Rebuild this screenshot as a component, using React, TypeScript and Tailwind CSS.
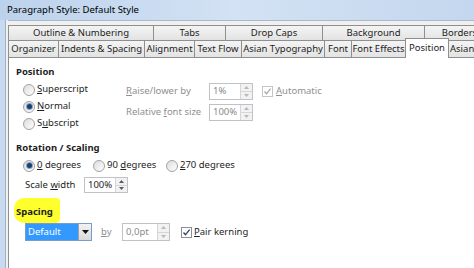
import React from "react";

const ink = "text-[#1e1e1e]";

function U({ children }: { children: React.ReactNode }) {
  return <span className="underline underline-offset-[1px]">{children}</span>;
}

function Radio({ checked }: { checked?: boolean }) {
  return (
    <span className="flex h-[12px] w-[12px] shrink-0 items-center justify-center rounded-full border border-[#a3a3a3] bg-gradient-to-br from-[#dcdcdc] to-[#ffffff]">
      {checked && <span className="h-[5px] w-[5px] rounded-full bg-[#1f3f66] shadow-[0_0_0_1px_#7fa6cf]" />}
    </span>
  );
}

function Check({ disabled }: { disabled?: boolean }) {
  return (
    <span
      className={`flex h-[11px] w-[11px] shrink-0 items-center justify-center border bg-white ${
        disabled ? "border-[#c4c4c4]" : "border-[#8e8f8f]"
      }`}
    >
      <svg width="9" height="9" viewBox="0 0 9 9">
        <path
          d="M1.5 4.5 L3.5 6.8 L7.6 1.6"
          fill="none"
          stroke={disabled ? "#a8a8a8" : "#2a3f6a"}
          strokeWidth="1.3"
        />
      </svg>
    </span>
  );
}

function Arrows({ dim }: { dim?: boolean }) {
  const c = dim ? "#b8b8b8" : "#5a5a5a";
  return (
    <div className="flex w-[12px] shrink-0 flex-col border-l border-[#d6d6d6] bg-[#f2f2f2]">
      <div className="flex flex-1 items-center justify-center border-b border-[#d6d6d6]">
        <svg width="5" height="3" viewBox="0 0 5 3">
          <path d="M0 3 L2.5 0 L5 3 Z" fill={c} />
        </svg>
      </div>
      <div className="flex flex-1 items-center justify-center">
        <svg width="5" height="3" viewBox="0 0 5 3">
          <path d="M0 0 L2.5 3 L5 0 Z" fill={c} />
        </svg>
      </div>
    </div>
  );
}

function Spin({ value, w, h, dim }: { value: string; w: string; h: string; dim?: boolean }) {
  return (
    <div className={`flex ${w} ${h} shrink-0 border border-[#c0c2c7] bg-white`}>
      <div className={`flex flex-1 items-center pl-[3px] ${dim ? "text-[#8a8a8a]" : ink}`}>{value}</div>
      <Arrows dim={dim} />
    </div>
  );
}

function Tab({ w, label, cls = "" }: { w: string; label: string; cls?: string }) {
  return (
    <div
      className={`flex ${w} shrink-0 items-center justify-center overflow-hidden whitespace-nowrap border-r border-t border-[#8e8f8f] bg-gradient-to-b from-[#f4f4f4] to-[#e3e3e3] ${cls}`}
    >
      {label}
    </div>
  );
}

export default function App() {
  return (
    <div className={`h-[268px] w-[474px] overflow-hidden bg-[#c8daf0] font-['Noto_Sans',sans-serif] text-[9.5px] ${ink}`}>
      {/* title bar */}
      <div className="flex h-[20px] items-center bg-gradient-to-r from-[#bcd2ec] via-[#d3e2f4] to-[#c4d7ee] pl-[7px] text-[9.5px] text-black">
        Paragraph Style: Default Style
      </div>

      <div className="flex h-[248px]">
        {/* left window frame */}
        <div className="flex w-[8px] shrink-0">
          <div className="w-[5px] bg-[#c8daf0]" />
          <div className="w-[1px] bg-[#9fb1c8]" />
          <div className="w-[2px] bg-[#f0f0f0]" />
        </div>

        <div className="flex min-w-0 flex-1 flex-col bg-[#f0f0f0]">
          <div className="h-[1px] bg-[#a9b8cb]" />
          <div className="h-[4px]" />

          {/* back tab row */}
          <div className="flex h-[15px] border-l border-[#8e8f8f]">
            <Tab w="w-[145px]" label="Outline & Numbering" />
            <Tab w="w-[72px]" label="Tabs" />
            <Tab w="w-[97px]" label="Drop Caps" />
            <Tab w="w-[102px]" label="Background" />
            <Tab w="w-[70px]" label="Borders" />
          </div>

          {/* front tab row */}
          <div className="flex h-[17px] items-start border-l border-[#8e8f8f]">
            <Tab w="w-[50px] h-[17px]" label="Organizer" />
            <Tab w="w-[86px] h-[17px]" label="Indents & Spacing" />
            <Tab w="w-[50px] h-[17px]" label="Alignment" />
            <Tab w="w-[47px] h-[17px]" label="Text Flow" />
            <Tab w="w-[83px] h-[17px]" label="Asian Typography" />
            <Tab w="w-[27px] h-[17px]" label="Font" />
            <Tab w="w-[54px] h-[17px]" label="Font Effects" />
            <div className="relative z-10 -ml-px -mt-[2px] flex h-[20px] w-[44px] shrink-0 items-center justify-center border-x border-t border-[#8e8f8f] bg-white pb-[1px]">
              Position
            </div>
            <Tab w="w-[60px] h-[17px]" label="Asian Layout" cls="justify-start pl-[1px]" />
          </div>

          {/* page */}
          <div className="flex-1 border-l border-t border-[#8e8f8f] bg-white pl-[7px] pt-[6px]">
            <div className="h-[16px] font-bold leading-[16px]">Position</div>

            <div className="flex">
              <div className="mt-[1px] flex w-[110px] flex-col pl-[7px]">
                <div className="flex h-[17px] items-center gap-[2px]">
                  <Radio />
                  <span>
                    <U>S</U>uperscript
                  </span>
                </div>
                <div className="flex h-[17px] items-center gap-[2px]">
                  <Radio checked />
                  <span>
                    <U>N</U>ormal
                  </span>
                </div>
                <div className="flex h-[17px] items-center gap-[2px]">
                  <Radio />
                  <span>
                    S<U>u</U>bscript
                  </span>
                </div>
              </div>

              <div className="mt-[3px] flex flex-col gap-[4px] text-[#8f8f8f]">
                <div className="flex h-[17px] items-center">
                  <span className="w-[83px]">
                    <U>R</U>aise/lower by
                  </span>
                  <Spin value="1%" w="w-[44px]" h="h-[17px]" dim />
                  <span className="ml-[9px] flex items-center gap-[3px]">
                    <Check disabled />
                    <span>
                      <U>A</U>utomatic
                    </span>
                  </span>
                </div>
                <div className="flex h-[17px] items-center">
                  <span className="w-[83px]">
                    Relative <U>f</U>ont size
                  </span>
                  <Spin value="100%" w="w-[44px]" h="h-[17px]" dim />
                </div>
              </div>
            </div>

            <div className="mt-[8px] h-[16px] font-bold leading-[16px]">Rotation / Scaling</div>

            <div className="mt-[1px] flex h-[17px] items-center pl-[7px]">
              <div className="flex w-[70px] items-center gap-[2px]">
                <Radio checked />
                <span>
                  <U>0</U> degrees
                </span>
              </div>
              <div className="flex w-[73px] items-center gap-[2px]">
                <Radio />
                <span>
                  90 <U>d</U>egrees
                </span>
              </div>
              <div className="flex items-center gap-[2px]">
                <Radio />
                <span>
                  <U>2</U>70 degrees
                </span>
              </div>
            </div>

            <div className="mt-[3px] flex h-[16px] items-center pl-[9px]">
              <span className="w-[59px]">
                Scale <U>w</U>idth
              </span>
              <Spin value="100%" w="w-[44px]" h="h-[16px]" />
            </div>

            <div className="relative mt-[11px] h-[16px] font-bold leading-[16px]">
              <div className="absolute -left-[2px] -top-[6px] h-[25px] w-[46px] rounded-l-[10px] rounded-r-[4px] bg-[#ffff2e]" />
              <span className="relative">Spacing</span>
            </div>

            <div className="mt-[3px] flex h-[18px] items-center pl-[9px]">
              <div className="flex h-[18px] w-[67px] shrink-0 border border-[#7a9ccc] bg-[#3399ff]">
                <div className="flex flex-1 items-center pl-[2px] text-white">Default</div>
                <div className="flex w-[13px] items-center justify-center border-l border-[#a0a0a0] bg-gradient-to-b from-[#f2f2f2] to-[#d9d9d9]">
                  <svg width="7" height="4" viewBox="0 0 7 4">
                    <path d="M0 0 L3.5 4 L7 0 Z" fill="#111" />
                  </svg>
                </div>
              </div>
              <span className="ml-[9px] w-[21px] text-[#8f8f8f]">
                <U>b</U>y
              </span>
              <Spin value="0,0pt" w="w-[48px]" h="h-[18px]" dim />
              <span className="ml-[11px] flex items-center gap-[2px]">
                <Check />
                <span>
                  <U>P</U>air kerning
                </span>
              </span>
            </div>
          </div>
        </div>
      </div>
    </div>
  );
}
